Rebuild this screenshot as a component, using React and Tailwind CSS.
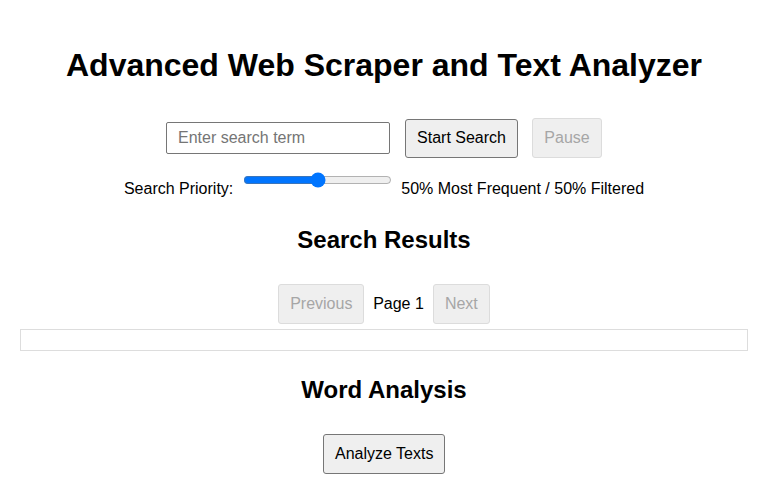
import { useState } from 'react'

const btn =
  'h-[39px] px-[11px] text-[16px] bg-[#efefef] border border-[#767676] rounded-[3px] text-black whitespace-nowrap'
const btnOff =
  'h-[40px] px-[11px] text-[16px] bg-[#efefef] border border-[#dcdcdc] rounded-[3px] text-[#a6a6a6] whitespace-nowrap'

export default function App() {
  const [term, setTerm] = useState('')
  const [priority, setPriority] = useState(50)

  return (
    <div className="min-h-[480px] bg-white px-5 text-black" style={{ fontFamily: '"Liberation Sans", Arial, sans-serif' }}>
      <h1 className="pt-[47px] text-center text-[32px] leading-[37px] font-bold">
        Advanced Web Scraper and Text Analyzer
      </h1>

      <div className="mt-[34px] flex items-center justify-center">
        <input
          value={term}
          onChange={(e) => setTerm(e.target.value)}
          placeholder="Enter search term"
          className="w-[224px] h-[32px] px-[11px] text-[16px] border border-[#767676] rounded-[2px] placeholder:text-[#757575] outline-none"
        />
        <button className={`${btn} ml-[15px] w-[113px]`}>Start Search</button>
        <button disabled className={`${btnOff} h-[39px] ml-[14px] w-[70px]`}>
          Pause
        </button>
      </div>

      <div className="mt-[17px] flex items-center justify-center text-[16px] h-[20px]">
        <span className="mt-[7px]">Search Priority:</span>
        <input
          type="range"
          min="0"
          max="100"
          value={priority}
          onChange={(e) => setPriority(Number(e.target.value))}
          className="ml-[10px] w-[149px] -mt-[11px]"
        />
        <span className="ml-[9px] mt-[7px]">
          {priority}% Most Frequent / {100 - priority}% Filtered
        </span>
      </div>

      <h2 className="mt-[31px] text-center text-[24px] leading-[28px] font-bold">Search Results</h2>

      <div className="mt-[30px] flex items-center justify-center gap-[9px]">
        <button disabled className={`${btnOff} w-[86px]`}>Previous</button>
        <span className="text-[16px]">Page 1</span>
        <button disabled className={`${btnOff} w-[57px]`}>Next</button>
      </div>

      <div className="mt-[5px] h-[22px] border border-[#dddddd]"></div>

      <h2 className="mt-[25px] text-center text-[24px] leading-[28px] font-bold">Word Analysis</h2>

      <div className="mt-[30px] flex justify-center">
        <button className={`${btn} h-[40px] w-[122px]`}>Analyze Texts</button>
      </div>
    </div>
  )
}
